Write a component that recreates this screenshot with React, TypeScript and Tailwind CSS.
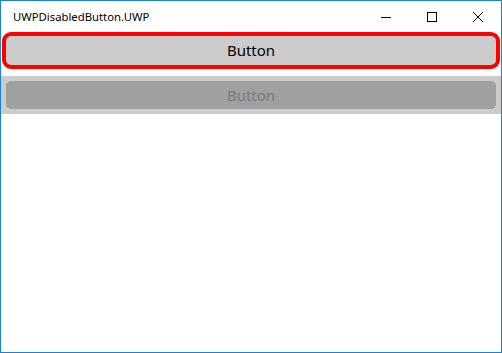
import React from 'react';

const App = () => {
  return (
    <div
      className="w-[502px] h-[353px] border border-[#1883d7] bg-white flex flex-col overflow-hidden"
      style={{ fontFamily: '"Noto Sans", "Open Sans", sans-serif' }}
    >
      {/* Title bar */}
      <div className="h-[31px] flex items-center flex-shrink-0">
        <span className="pl-3 text-[11.3px] text-black leading-none">UWPDisabledButton.UWP</span>
        <div className="ml-auto flex h-full">
          <div className="w-[46px] h-full flex items-center justify-center">
            <svg width="10" height="10" viewBox="0 0 10 10">
              <line x1="0" y1="5.5" x2="10" y2="5.5" stroke="#000" strokeWidth="1" />
            </svg>
          </div>
          <div className="w-[46px] h-full flex items-center justify-center">
            <svg width="10" height="10" viewBox="0 0 10 10">
              <rect x="0.5" y="0.5" width="9" height="9" fill="none" stroke="#000" strokeWidth="1" />
            </svg>
          </div>
          <div className="w-[46px] h-full flex items-center justify-center">
            <svg width="10" height="10" viewBox="0 0 10 10">
              <path d="M0 0 L10 10 M10 0 L0 10" stroke="#000" strokeWidth="1" />
            </svg>
          </div>
        </div>
      </div>

      {/* Enabled button with red border */}
      <div className="px-[1px]">
        <button className="w-full h-[37px] rounded-[9px] border-[4.5px] border-[#ff0000] bg-[#cccccc] text-[15px] text-black flex items-center justify-center">
          Button
        </button>
      </div>

      {/* Disabled button strip */}
      <div className="mt-[7px] h-[38px] bg-[#cccccc] px-[5px] flex items-center">
        <button
          disabled
          className="w-full h-[28px] rounded-[5px] bg-[#a0a0a0] text-[15px] text-[#7a7a7a] flex items-center justify-center"
        >
          Button
        </button>
      </div>
    </div>
  );
};

export default App;
